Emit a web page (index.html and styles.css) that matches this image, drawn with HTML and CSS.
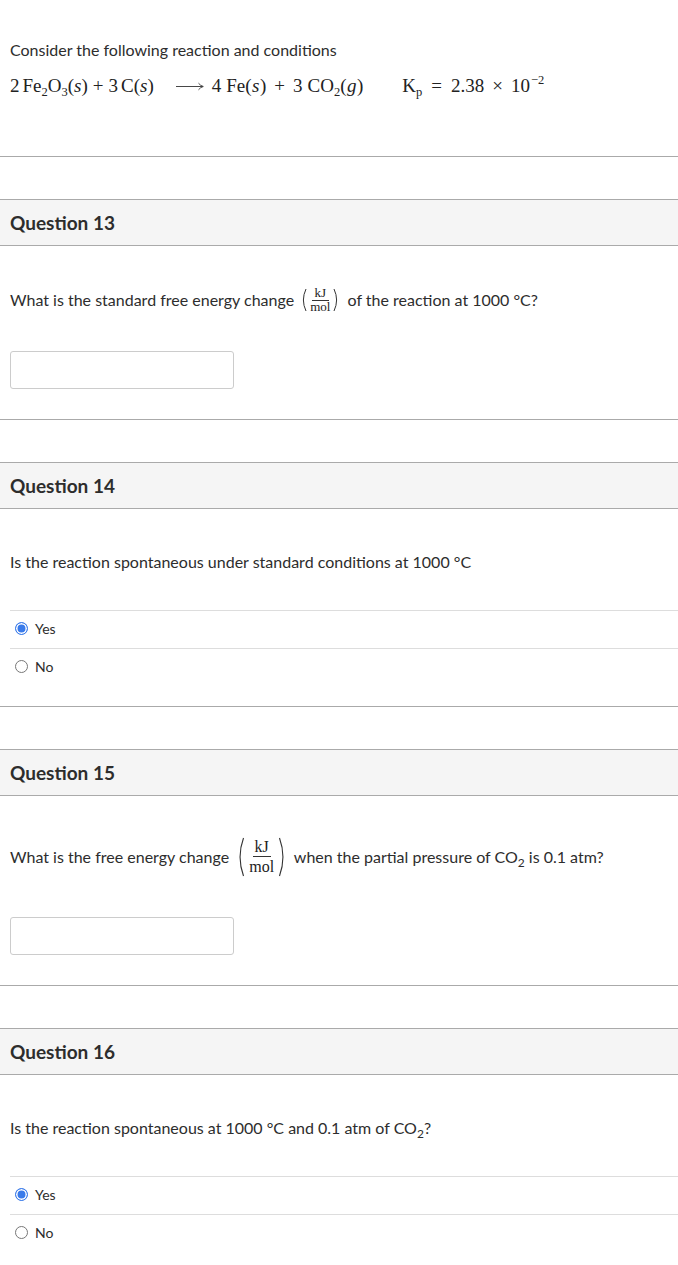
FILE: index.html
```html
<!DOCTYPE html>
<html lang="en">
<head>
<meta charset="utf-8">
<title>Quiz</title>
<link rel="stylesheet" href="styles.css">
</head>
<body>
<div class="intro">
  <p class="txt">Consider the following reaction and conditions</p>
  <div class="eq">
    <span class="m left">2<span class="th"></span>Fe<sub>2</sub>O<sub>3</sub>(<i>s</i>)<span class="op">+</span>3<span class="th"></span>C(<i>s</i>)</span>
    <svg class="arrow" width="28" height="10" viewBox="0 0 28 10"><path d="M0 5.5H26.5" stroke="#333" stroke-width="0.9" fill="none"/><path d="M22.5 2.2Q24.5 4.8 27.3 5.5Q24.5 6.2 22.5 8.8" stroke="#333" stroke-width="0.9" fill="none"/></svg>
    <span class="m right">4<span class="th"></span>Fe(<i>s</i>)<span class="op">+</span>3<span class="th"></span>CO<sub>2</sub>(<i>g</i>)</span>
    <span class="m kp">K<sub>p</sub><span class="op rel">=</span>2.38<span class="op">×</span>10<sup>−2</sup></span>
  </div>
</div>

<section class="q q13">
  <div class="qhead">Question 13</div>
  <div class="qbody">
    <p class="txt qtext">What is the standard free energy change <span class="frac-s"><svg class="par" width="7" height="24" viewBox="0 0 7 24"><path d="M6 1Q0.8 12 6 23" stroke="#333" stroke-width="1" fill="none"/></svg><span class="fr sm"><span class="num">kJ</span><span class="den">mol</span></span><svg class="par" width="7" height="24" viewBox="0 0 7 24"><path d="M1 1Q6.2 12 1 23" stroke="#333" stroke-width="1" fill="none"/></svg></span> of the reaction at 1000 °C?</p>
    <div class="answer"></div>
  </div>
</section>

<section class="q">
  <div class="qhead">Question 14</div>
  <div class="qbody">
    <p class="txt qtext">Is the reaction spontaneous under standard conditions at 1000 °C</p>
    <div class="opts">
      <div class="opt"><span class="radio on"></span><span class="lbl">Yes</span></div>
      <div class="opt"><span class="radio"></span><span class="lbl">No</span></div>
    </div>
  </div>
</section>

<section class="q">
  <div class="qhead">Question 15</div>
  <div class="qbody">
    <p class="txt qtext big">What is the free energy change <span class="frac-l"><svg class="par" width="9" height="40" viewBox="0 0 9 40"><path d="M7.5 1Q0.6 20 7.5 39" stroke="#333" stroke-width="1.1" fill="none"/></svg><span class="fr lg"><span class="num">kJ</span><span class="den">mol</span></span><svg class="par" width="9" height="40" viewBox="0 0 9 40"><path d="M1.5 1Q8.4 20 1.5 39" stroke="#333" stroke-width="1.1" fill="none"/></svg></span> when the partial pressure of CO<sub class="ts">2</sub> is 0.1 atm?</p>
    <div class="answer a2"></div>
  </div>
</section>

<section class="q">
  <div class="qhead">Question 16</div>
  <div class="qbody">
    <p class="txt qtext">Is the reaction spontaneous at 1000 °C and 0.1 atm of CO<sub class="ts">2</sub>?</p>
    <div class="opts">
      <div class="opt"><span class="radio on"></span><span class="lbl">Yes</span></div>
      <div class="opt"><span class="radio"></span><span class="lbl">No</span></div>
    </div>
  </div>
</section>
</body>
</html>
```

FILE: styles.css
```css
html, body {
  margin: 0;
  padding: 0;
  background: #fff;
}
body {
  font-family: Lato, "Liberation Sans", sans-serif;
  color: #2d2d2d;
  font-size: 16px;
  width: 678px;
}
.txt {
  margin: 0;
  font-size: 16px;
  line-height: 20px;
}
.intro {
  padding: 40px 10px 0;
  height: 116px;
  border-bottom: 1px solid #aaa;
}
.eq {
  margin-top: 14px;
  height: 24px;
  display: flex;
  align-items: center;
  font-family: "Liberation Serif", "DejaVu Serif", serif;
  font-size: 19px;
  line-height: 24px;
  color: #222;
}
.m { white-space: nowrap; }
.m sub {
  font-size: 12.5px;
  vertical-align: -4px;
  line-height: 0;
}
.m sup {
  font-size: 12.5px;
  vertical-align: 8px;
  line-height: 0;
  margin-left: 1px;
}
.m i { font-style: italic; }
.th { display: inline-block; width: 3px; }
.op { padding: 0 6px; }
.left .op { padding: 0 5px; }
.left .th { width: 3px; }
.right .op { padding: 0 8px; }
.right .th { width: 5px; }
.right i { padding: 0 0.5px; }
.kp .op { padding: 0 8px; }
.kp .op.rel { padding: 0 9px; }
.arrow { margin: 0 8px 0 22px; }
.kp { margin-left: 39px; }
.q {
  padding-top: 42px;
  border-bottom: 1px solid #aaa;
}
.qhead {
  background: #f5f5f5;
  border-top: 1px solid #aaa;
  border-bottom: 1px solid #aaa;
  height: 45px;
  line-height: 45px;
  padding-left: 10px;
  font-size: 19px;
  font-weight: bold;
  color: #2d2d2d;
}
.qbody {
  padding: 43px 0 0 10px;
}
.q13 .qbody { padding-top: 44px; }
.qtext.big {
  line-height: 40px;
  height: 40px;
  margin-top: -2px;
}
.ts {
  font-size: 12px;
  line-height: 0;
  vertical-align: -4px;
}
.answer {
  margin-top: 41px;
  width: 222px;
  height: 36px;
  border: 1px solid #ccc;
  border-radius: 3px;
  margin-bottom: 30px;
}
.answer.a2 { margin-top: 40px; }
.frac-s, .frac-l {
  display: inline-flex;
  align-items: center;
  vertical-align: middle;
  font-family: "Liberation Serif", "DejaVu Serif", serif;
  color: #222;
  line-height: normal;
}
.frac-s { margin: -4px 3px 0 2px; height: 20px; }
.fr {
  display: inline-flex;
  flex-direction: column;
  align-items: center;
  margin: 0 1px;
}
.fr .num { border-bottom: 1px solid #333; padding: 0 2px; }
.fr.sm { font-size: 13px; line-height: 12px; margin: 0 3px; }
.fr.sm .num { padding: 0 3px 1px; }
.fr.lg { font-size: 16px; line-height: 17px; margin: 0 4px; }
.fr.lg .num { padding: 0 2px 1px; }
.fr.lg .den { padding-top: 1px; }
.frac-l { margin: -4px 3px 0 3px; }
.opts {
  margin-top: 38px;
  padding-bottom: 20px;
}
.opt {
  border-top: 1px solid #ddd;
  height: 35px;
  padding-bottom: 2px;
  display: flex;
  align-items: center;
}
.radio {
  width: 11px;
  height: 11px;
  border: 1px solid #777;
  border-radius: 50%;
  margin-left: 5px;
  margin-right: 7px;
}
.radio.on {
  border: 1px solid #3a7bea;
  background: #3a7bea;
  box-shadow: inset 0 0 0 1.5px #fff;
}
.lbl {
  font-size: 14px;
  line-height: 20px;
}
section.q:last-of-type { border-bottom: none; }
section.q:last-of-type .opts { padding-bottom: 0; }
```
